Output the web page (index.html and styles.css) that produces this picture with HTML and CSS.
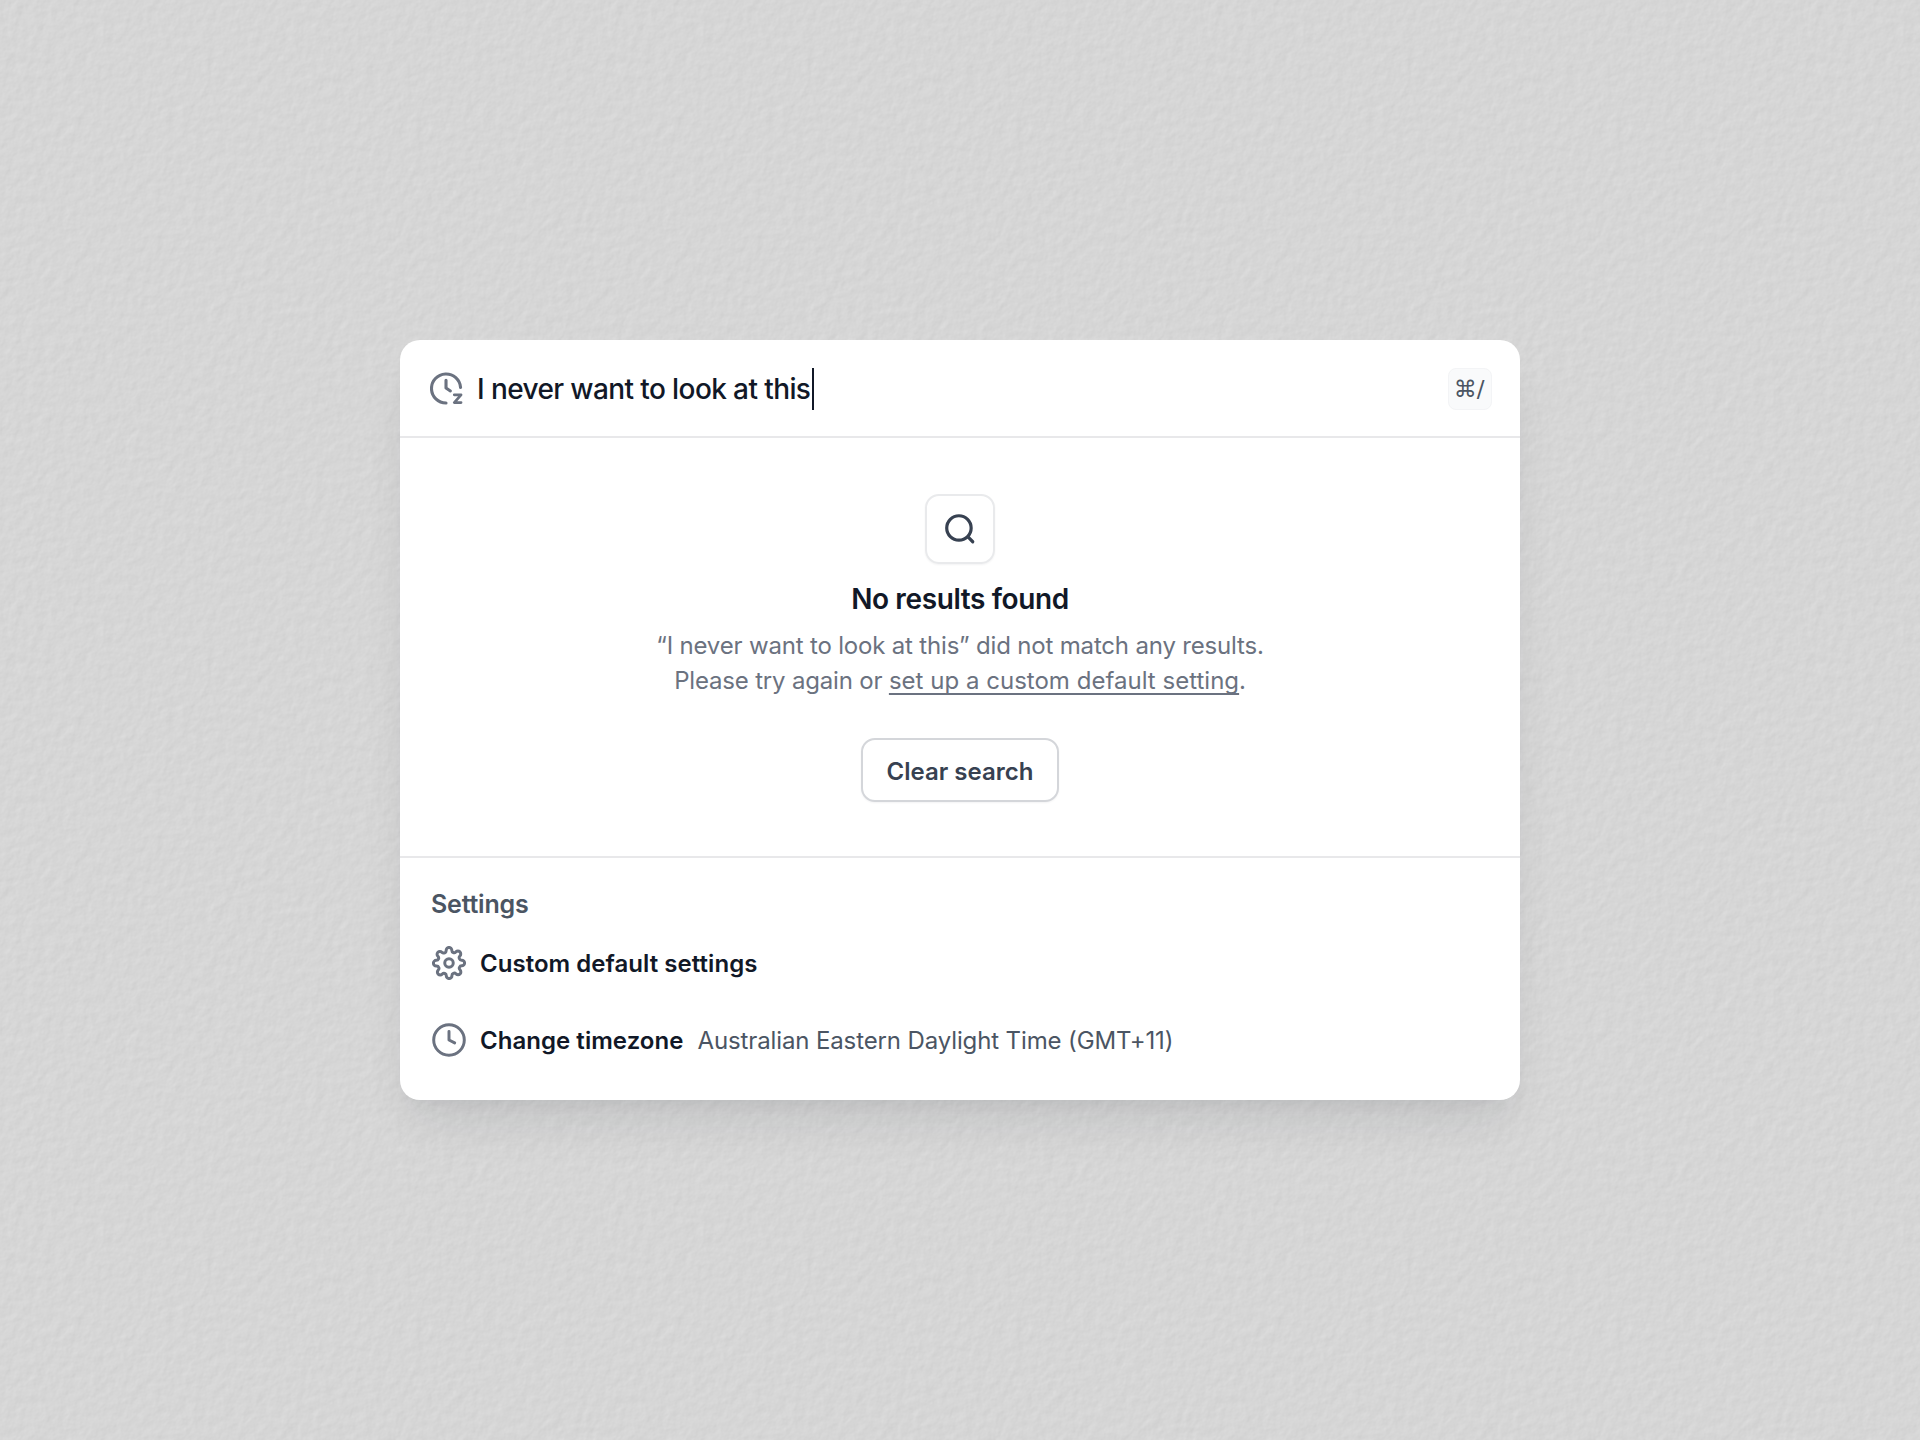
FILE: index.html
```html
<!DOCTYPE html>
<html lang="en">
<head>
  <meta charset="UTF-8">
  <title>Search - No results</title>
  <link rel="stylesheet" href="styles.css">
</head>
<body>
  <div class="palette">
    <!-- Search bar -->
    <div class="search-bar">
      <svg class="snooze-icon" viewBox="0 0 34 34" fill="none" stroke="#6b7280" stroke-width="3.2" stroke-linecap="round" stroke-linejoin="round">
        <path d="M16.5 32A15 15 0 1 1 31.5 16"/>
        <path d="M16.5 8.5V16.5L21 19.5"/>
        <path d="M25 23.5H32L25 31.5H32" stroke-width="2.8"/>
      </svg>
      <div class="search-text">I never want to look at this<span class="caret"></span></div>
      <div class="kbd">⌘/</div>
    </div>

    <!-- Empty state -->
    <div class="empty">
      <div class="empty-icon">
        <svg viewBox="0 0 32 32" fill="none" stroke="#374151" stroke-width="3" stroke-linecap="round" stroke-linejoin="round">
          <circle cx="15" cy="15" r="11.5"/>
          <path d="M23.5 23.5L28 28"/>
        </svg>
      </div>
      <h2 class="empty-title">No results found</h2>
      <p class="empty-text">“I never want to look at this” did not match any results.<br>Please try again or <a href="#">set up a custom default setting</a>.</p>
      <button class="clear-btn">Clear search</button>
    </div>

    <!-- Settings list -->
    <div class="settings">
      <div class="settings-label">Settings</div>
      <div class="row row-first">
        <svg class="row-icon" viewBox="0 0 24 24" fill="none" stroke="#6b7280" stroke-width="2.1" stroke-linecap="round" stroke-linejoin="round">
          <circle cx="12" cy="12" r="3"/>
          <path d="M19.4 15a1.65 1.65 0 0 0 .33 1.82l.06.06a2 2 0 1 1-2.83 2.83l-.06-.06a1.65 1.65 0 0 0-2.82 1.17V21a2 2 0 1 1-4 0v-.09a1.65 1.65 0 0 0-2.82-1.13l-.06.06a2 2 0 1 1-2.83-2.83l.06-.06a1.65 1.65 0 0 0-1.17-2.82H3a2 2 0 1 1 0-4h.09a1.65 1.65 0 0 0 1.13-2.82l-.06-.06a2 2 0 1 1 2.83-2.83l.06.06a1.65 1.65 0 0 0 1.82.33H9a1.65 1.65 0 0 0 1-1.51V3a2 2 0 1 1 4 0v.09a1.65 1.65 0 0 0 2.82 1.13l.06-.06a2 2 0 1 1 2.83 2.83l-.06.06a1.65 1.65 0 0 0-.33 1.82V9a1.65 1.65 0 0 0 1.51 1H21a2 2 0 1 1 0 4h-.09a1.65 1.65 0 0 0-1.51 1z"/>
        </svg>
        <span class="row-name">Custom default settings</span>
      </div>
      <div class="row">
        <svg class="row-icon" viewBox="0 0 24 24" fill="none" stroke="#6b7280" stroke-width="2.1" stroke-linecap="round" stroke-linejoin="round">
          <circle cx="12" cy="12" r="10.8"/>
          <path d="M12 6v6l4 2"/>
        </svg>
        <span class="row-name">Change timezone</span>
        <span class="row-value">Australian Eastern Daylight Time (GMT+11)</span>
      </div>
    </div>
  </div>
</body>
</html>
```

FILE: styles.css
```css
* { box-sizing: border-box; }
html, body { height: 100%; }
body {
  margin: 0;
  font-family: Inter, "Liberation Sans", sans-serif;
  background-color: #d8d8d8;
  background-image: url("data:image/svg+xml,%3Csvg xmlns='http://www.w3.org/2000/svg' width='600' height='600'%3E%3Cfilter id='n' x='0' y='0' width='100%25' height='100%25'%3E%3CfeTurbulence type='fractalNoise' baseFrequency='0.1' numOctaves='4' stitchTiles='stitch'/%3E%3CfeDiffuseLighting surfaceScale='0.16' lighting-color='%23fff' color-interpolation-filters='sRGB'%3E%3CfeDistantLight azimuth='225' elevation='57'/%3E%3C/feDiffuseLighting%3E%3C/filter%3E%3Crect width='600' height='600' filter='url(%23n)'/%3E%3C/svg%3E");
  padding-top: 340px;
}
.palette {
  width: 1120px;
  height: 760px;
  margin: 0 auto;
  background: #fff;
  border-radius: 20px;
  box-shadow: 0 30px 50px -14px rgba(16, 24, 40, 0.11), 0 10px 16px -6px rgba(16, 24, 40, 0.04);
  overflow: hidden;
}
.search-bar {
  height: 98px;
  display: flex;
  align-items: center;
  padding: 0 28px 0 30px;
  border-bottom: 2px solid #e8e8ea;
}
.snooze-icon { width: 33px; height: 33px; flex-shrink: 0; margin: 1px 14px 0 0; }
.search-text {
  flex: 1;
  display: flex;
  align-items: center;
  font-size: 28px;
  font-weight: 450;
  color: #111827;
  letter-spacing: -0.6px;
  padding-top: 2px;
}
.caret { width: 2px; height: 42px; background: #111827; margin-left: 2px; }
.kbd {
  width: 44px;
  height: 42px;
  margin-top: 1px;
  padding-right: 2px;
  display: flex;
  align-items: center;
  justify-content: center;
  border-radius: 8px;
  background: #f9fafb;
  border: 1px solid #f3f4f6;
  color: #4b5563;
  font-size: 23px;
  font-family: "DejaVu Sans", sans-serif;
}
.empty {
  height: 420px;
  display: flex;
  flex-direction: column;
  align-items: center;
  padding-top: 56px;
  border-bottom: 2px solid #e8e8ea;
}
.empty-icon {
  width: 70px;
  height: 70px;
  display: flex;
  align-items: center;
  justify-content: center;
  border: 2px solid #e9eaec;
  border-radius: 14px;
  box-shadow: 0 1px 2px rgba(16, 24, 40, 0.05);
}
.empty-icon svg { width: 34px; height: 34px; }
.empty-title {
  margin: 16px 0 0;
  font-size: 28px;
  line-height: 38px;
  font-weight: 600;
  color: #111827;
  letter-spacing: -0.38px;
}
.empty-text {
  margin: 10px 0 0;
  font-size: 24px;
  line-height: 35px;
  color: #6b7280;
  text-align: center;
  letter-spacing: -0.18px;
}
.empty-text a {
  color: #6b7280;
  letter-spacing: 0.02px;
  text-decoration: underline;
  text-decoration-skip-ink: none;
  text-underline-offset: 4px;
}
.clear-btn {
  margin-top: 40px;
  width: 198px;
  height: 64px;
  padding-top: 3px;
  font-family: inherit;
  font-size: 24px;
  font-weight: 600;
  color: #374151;
  background: #fff;
  border: 2px solid #d4d6da;
  border-radius: 14px;
  box-shadow: 0 1px 2px rgba(16, 24, 40, 0.05);
  letter-spacing: 0;
}
.settings { padding: 29px 31px 0; }
.settings-label {
  font-size: 25px;
  line-height: 34px;
  font-weight: 600;
  color: #4b5563;
  letter-spacing: -0.2px;
}
.row {
  display: flex;
  align-items: center;
  height: 34px;
  margin-top: 43px;
}
.row-first { margin-top: 25px; }
.row-icon { width: 34px; height: 34px; flex-shrink: 0; margin-right: 14px; margin-left: 1px; }
.row-name { font-size: 24px; font-weight: 600; color: #111827; letter-spacing: 0.04px; }
.row-value { margin-left: 14px; font-size: 24px; color: #4b5563; letter-spacing: -0.12px; }
```
